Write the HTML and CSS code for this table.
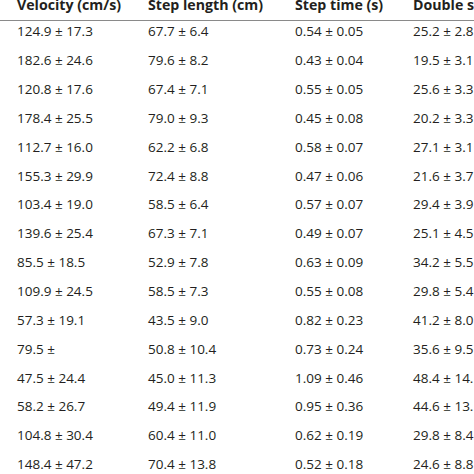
FILE: index.html
```html
<!DOCTYPE html>
<html>
<head>
<meta charset="utf-8">
<link rel="stylesheet" href="styles.css">
</head>
<body>
<div class="table">
  <div class="row head">
    <div>Velocity (cm/s)</div><div>Step length (cm)</div><div>Step time (s)</div><div>Double support (%)</div>
  </div>
  <div class="row"><div>124.9 ± 17.3</div><div>67.7 ± 6.4</div><div>0.54 ± 0.05</div><div>25.2 ± 2.8</div></div>
  <div class="row"><div>182.6 ± 24.6</div><div>79.6 ± 8.2</div><div>0.43 ± 0.04</div><div>19.5 ± 3.1</div></div>
  <div class="row"><div>120.8 ± 17.6</div><div>67.4 ± 7.1</div><div>0.55 ± 0.05</div><div>25.6 ± 3.3</div></div>
  <div class="row"><div>178.4 ± 25.5</div><div>79.0 ± 9.3</div><div>0.45 ± 0.08</div><div>20.2 ± 3.3</div></div>
  <div class="row"><div>112.7 ± 16.0</div><div>62.2 ± 6.8</div><div>0.58 ± 0.07</div><div>27.1 ± 3.1</div></div>
  <div class="row"><div>155.3 ± 29.9</div><div>72.4 ± 8.8</div><div>0.47 ± 0.06</div><div>21.6 ± 3.7</div></div>
  <div class="row"><div>103.4 ± 19.0</div><div>58.5 ± 6.4</div><div>0.57 ± 0.07</div><div>29.4 ± 3.9</div></div>
  <div class="row"><div>139.6 ± 25.4</div><div>67.3 ± 7.1</div><div>0.49 ± 0.07</div><div>25.1 ± 4.5</div></div>
  <div class="row"><div>85.5 ± 18.5</div><div>52.9 ± 7.8</div><div>0.63 ± 0.09</div><div>34.2 ± 5.5</div></div>
  <div class="row"><div>109.9 ± 24.5</div><div>58.5 ± 7.3</div><div>0.55 ± 0.08</div><div>29.8 ± 5.4</div></div>
  <div class="row"><div>57.3 ± 19.1</div><div>43.5 ± 9.0</div><div>0.82 ± 0.23</div><div>41.2 ± 8.0</div></div>
  <div class="row"><div>79.5 ±</div><div>50.8 ± 10.4</div><div>0.73 ± 0.24</div><div>35.6 ± 9.5</div></div>
  <div class="row"><div>47.5 ± 24.4</div><div>45.0 ± 11.3</div><div>1.09 ± 0.46</div><div>48.4 ± 14.1</div></div>
  <div class="row"><div>58.2 ± 26.7</div><div>49.4 ± 11.9</div><div>0.95 ± 0.36</div><div>44.6 ± 13.1</div></div>
  <div class="row"><div>104.8 ± 30.4</div><div>60.4 ± 11.0</div><div>0.62 ± 0.19</div><div>29.8 ± 8.4</div></div>
  <div class="row"><div>148.4 ± 47.2</div><div>70.4 ± 13.8</div><div>0.52 ± 0.18</div><div>24.6 ± 8.8</div></div>
</div>
</body>
</html>
```
FILE: styles.css
```css
html, body {
  margin: 0;
  padding: 0;
  background: #fff;
  overflow: hidden;
}
body {
  width: 474px;
  height: 474px;
  font-family: "Open Sans", sans-serif;
  font-size: 13.5px;
  color: #231f20;
}
.table {
  margin-top: -4.6px;
  white-space: nowrap;
}
.row {
  display: grid;
  grid-template-columns: 131px 147px 118px 200px;
  padding-left: 17px;
  height: 28.87px;
  line-height: 20px;
}
.head {
  font-weight: 700;
  font-size: 14.2px;
  height: 24.8px;
  border-bottom: 1px solid #8a8a8a;
}
```
